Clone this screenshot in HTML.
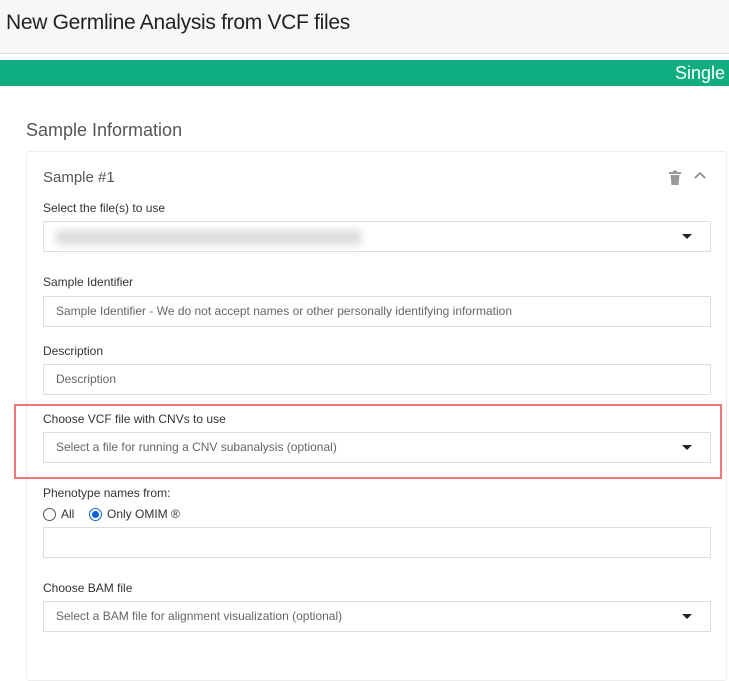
<!DOCTYPE html>
<html><head><style>
*{box-sizing:border-box;margin:0;padding:0}
body{width:729px;height:668px;overflow:hidden;background:#fff;font-family:"Liberation Sans",sans-serif;position:relative;color:#555}
.abs{position:absolute}
.hdr{left:0;top:0;width:729px;height:54px;background:#f7f7f7;border-bottom:1px solid #ddd}
.hdr span{position:absolute;left:6px;top:11px;font-size:21px;color:#222;letter-spacing:-0.3px}
.green{left:0;top:60px;width:729px;height:26px;background:#10ad80;color:#fff;font-size:18px;text-align:right;padding-right:4px;line-height:26px}
.card{left:26px;top:151px;width:701px;height:530px;border:1px solid #eee;border-radius:3px}
.lbl{font-size:12px;color:#333;left:43px}
.box{left:43px;width:668px;height:31px;border:1px solid #ddd;background:#fff;font-size:12px;color:#666;padding-left:12px;line-height:29px}
.arr{position:absolute;right:18px;top:12px;width:0;height:0;border-left:5px solid transparent;border-right:5px solid transparent;border-top:5px solid #222}
</style></head><body>
<div class="abs hdr"><span>New Germline Analysis from VCF files</span></div>
<div class="abs green">Single</div>
<div class="abs" style="left:26px;top:120px;font-size:18px;color:#555">Sample Information</div>
<div class="abs card"></div>
<div class="abs" style="left:43px;top:169px;font-size:15px;color:#555">Sample #1</div>
<svg class="abs" style="left:668px;top:170px" width="14" height="16" viewBox="0 0 14 16"><rect x="1" y="2" width="12" height="2" fill="#999"/><rect x="5" y="0.5" width="4" height="2" fill="#999"/><path d="M2.5 5h9l-1 10h-7z" fill="#999"/></svg>
<svg class="abs" style="left:693px;top:170px" width="14" height="10" viewBox="0 0 14 10"><path d="M2 8l5-5 5 5" stroke="#888" stroke-width="1.6" fill="none"/></svg>
<div class="abs lbl" style="top:201px">Select the file(s) to use</div>
<div class="abs box" style="top:221px"><div style="position:absolute;left:12px;top:8px;width:305px;height:15px;background:#ddd;filter:blur(4px)"></div><div class="arr"></div></div>
<div class="abs lbl" style="top:275px">Sample Identifier</div>
<div class="abs box" style="top:296px">Sample Identifier - We do not accept names or other personally identifying information</div>
<div class="abs lbl" style="top:344px">Description</div>
<div class="abs box" style="top:364px">Description</div>
<div class="abs" style="left:14px;top:404px;width:708px;height:75px;border:2px solid #f07878"></div>
<div class="abs lbl" style="top:412px">Choose VCF file with CNVs to use</div>
<div class="abs box" style="top:432px">Select a file for running a CNV subanalysis (optional)<div class="arr"></div></div>
<div class="abs lbl" style="top:486px">Phenotype names from:</div>
<div class="abs" style="left:43px;top:508px;width:13px;height:13px;border:1px solid #555;border-radius:50%"></div>
<div class="abs" style="left:61px;top:507px;font-size:12px;color:#333">All</div>
<div class="abs" style="left:89px;top:508px;width:13px;height:13px;border:1px solid #0a66d8;border-radius:50%;padding:2px"><div style="width:7px;height:7px;background:#0a66d8;border-radius:50%"></div></div>
<div class="abs" style="left:107px;top:507px;font-size:12px;color:#333">Only OMIM ®</div>
<div class="abs box" style="top:527px"></div>
<div class="abs lbl" style="top:581px">Choose BAM file</div>
<div class="abs box" style="top:601px">Select a BAM file for alignment visualization (optional)<div class="arr"></div></div>
</body></html>
